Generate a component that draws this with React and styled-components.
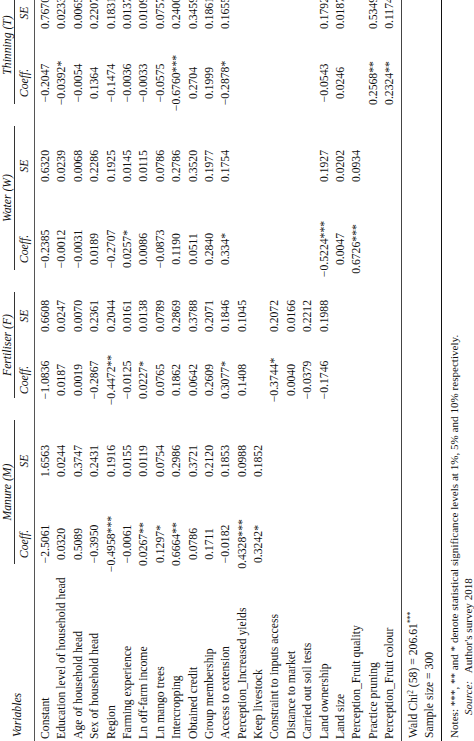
import React from "react";
import styled, { createGlobalStyle } from "styled-components";

const GlobalStyle = createGlobalStyle`
  html, body {
    margin: 0;
    padding: 0;
    background: #ffffff;
  }
`;

const groups = ["Manure (M)", "Fertiliser (F)", "Water (W)", "Thinning (T)"];

const rows = [
  ["Constant", "−2.5061", "1.6563", "−1.0836", "0.6608", "−0.2385", "0.6320", "−0.2047", "0.7670"],
  ["Education level of household head", "0.0320", "0.0244", "0.0187", "0.0247", "−0.0012", "0.0239", "−0.0392*", "0.0233"],
  ["Age of household head", "0.5089", "0.3747", "0.0019", "0.0070", "−0.0031", "0.0068", "−0.0054", "0.0065"],
  ["Sex of household head", "−0.3950", "0.2431", "−0.2867", "0.2361", "0.0189", "0.2286", "0.1364", "0.2207"],
  ["Region", "−0.4958***", "0.1916", "−0.4472**", "0.2044", "−0.2707", "0.1925", "−0.1474", "0.1831"],
  ["Farming experience", "−0.0061", "0.0155", "−0.0125", "0.0161", "0.0257*", "0.0145", "−0.0036", "0.0137"],
  ["Ln off-farm income", "0.0267**", "0.0119", "0.0227*", "0.0138", "0.0086", "0.0115", "−0.0033", "0.0109"],
  ["Ln mango trees", "0.1297*", "0.0754", "0.0765", "0.0789", "−0.0873", "0.0786", "−0.0575", "0.0757"],
  ["Intercropping", "0.6664**", "0.2986", "0.1862", "0.2869", "0.1190", "0.2786", "−0.6760***", "0.2400"],
  ["Obtained credit", "0.0786", "0.3721", "0.0642", "0.3788", "0.0511", "0.3520", "0.2704", "0.3459"],
  ["Group membership", "0.1711", "0.2120", "0.2609", "0.2071", "0.2840", "0.1977", "0.1999", "0.1861"],
  ["Access to extension", "−0.0182", "0.1853", "0.3077*", "0.1846", "0.334*", "0.1754", "−0.2878*", "0.1655"],
  ["Perception_Increased yields", "0.4328***", "0.0988", "0.1408", "0.1045", "", "", "", ""],
  ["Keep livestock", "0.3242*", "0.1852", "", "", "", "", "", ""],
  ["Constraint to inputs access", "", "", "−0.3744*", "0.2072", "", "", "", ""],
  ["Distance to market", "", "", "0.0040", "0.0166", "", "", "", ""],
  ["Carried out soil tests", "", "", "−0.0379", "0.2212", "", "", "", ""],
  ["Land ownership", "", "", "−0.1746", "0.1988", "−0.5224***", "0.1927", "−0.0543", "0.1792"],
  ["Land size", "", "", "", "", "0.0047", "0.0202", "0.0246", "0.0187"],
  ["Perception_Fruit quality", "", "", "", "", "0.6726***", "0.0934", "", ""],
  ["Practice pruning", "", "", "", "", "", "", "0.2568**", "0.5349"],
  ["Perception_Fruit colour", "", "", "", "", "", "", "0.2324**", "0.1174"],
];

export default function App() {
  return (
    <>
      <GlobalStyle />
      <Page>
        <Sheet>
          <Table>
            <VarHead>Variables</VarHead>
            {groups.map((g) => (
              <GroupHead key={g}>{g}</GroupHead>
            ))}
            {groups.map((g) => (
              <React.Fragment key={g}>
                <SubHead>Coeff.</SubHead>
                <SubHead>SE</SubHead>
              </React.Fragment>
            ))}
            <Rule $size={1} $color="#555" />
            <Spacer $h={3} />
            {rows.map((r) => (
              <React.Fragment key={r[0]}>
                <Label>{r[0]}</Label>
                {r.slice(1).map((v, i) => (
                  <Num key={i}>{v}</Num>
                ))}
              </React.Fragment>
            ))}
            <Spacer $h={2} />
            <Rule $size={1} $color="#444" />
            <Spacer $h={4} />
            <Stat>
              Wald Chi<Sup>2</Sup> (58) = 206.61<Sup>***</Sup>
            </Stat>
            <Stat>Sample size = 300</Stat>
            <Spacer $h={3} />
            <Rule $size={1.6} $color="#111" />
          </Table>
          <Notes>
            <Note>
              Notes: ***, ** and * denote statistical significance levels at
              1%, 5% and 10% respectively.
            </Note>
            <Note $indent={26}>
              <em>Source:</em>&nbsp;&nbsp; Author's survey 2018
            </Note>
          </Notes>
        </Sheet>
      </Page>
    </>
  );
}

const Page = styled.div`
  width: 474px;
  height: 741px;
  overflow: hidden;
  position: relative;
  background: #ffffff;
`;

const Sheet = styled.div`
  width: 741px;
  height: 474px;
  transform-origin: 0 0;
  transform: translateY(741px) rotate(-90deg);
  font-family: "Liberation Serif", "Times New Roman", serif;
  font-size: 11.7px;
  color: #111111;
  display: flex;
  flex-direction: column;
`;

const Table = styled.div`
  display: grid;
  grid-template-columns: 166px 62px 104px 58px 70px 64px 102px 64px 76px;
  width: 766px;
`;

const VarHead = styled.div`
  grid-row: 1 / span 2;
  align-self: center;
  font-style: italic;
  padding-left: 4px;
`;

const GroupHead = styled.div`
  grid-column: span 2;
  height: 14px;
  line-height: 15px;
  text-align: center;
  font-style: italic;
  margin: 0 11px;
  border-bottom: 1px solid #333;
  white-space: nowrap;
`;

const SubHead = styled.div`
  height: 19px;
  line-height: 19px;
  text-align: center;
  font-style: italic;
`;

const Rule = styled.div`
  grid-column: 1 / -1;
  height: ${(p) => p.$size}px;
  background: ${(p) => p.$color};
`;

const Spacer = styled.div`
  grid-column: 1 / -1;
  height: ${(p) => p.$h}px;
`;

const Label = styled.div`
  height: 16.4px;
  line-height: 16.4px;
  padding-left: 2px;
  white-space: nowrap;
`;

const Num = styled.div`
  height: 16.4px;
  line-height: 16.4px;
  text-align: center;
  white-space: nowrap;
`;

const Stat = styled.div`
  grid-column: 1 / -1;
  height: 16px;
  line-height: 16px;
  padding-left: 3px;
`;

const Sup = styled.sup`
  font-size: 7.5px;
  line-height: 0;
  vertical-align: 4px;
`;

const Notes = styled.div`
  display: flex;
  flex-direction: column;
  margin-top: 5px;
  font-size: 11.1px;
`;

const Note = styled.div`
  height: 14px;
  line-height: 14px;
  padding-left: ${(p) => p.$indent || 3}px;
  white-space: nowrap;
`;
